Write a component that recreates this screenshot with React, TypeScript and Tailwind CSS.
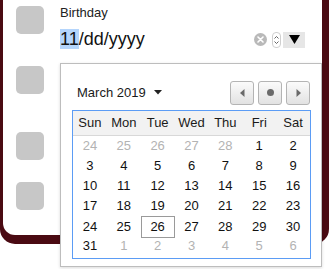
import React from "react";

const WEEKDAYS = ["Sun", "Mon", "Tue", "Wed", "Thu", "Fri", "Sat"];

type Day = { n: number; muted: boolean; today?: boolean };

const WEEKS: Day[][] = [
  [24, 25, 26, 27, 28].map((n) => ({ n, muted: true })).concat([1, 2].map((n) => ({ n, muted: false }))),
  [3, 4, 5, 6, 7, 8, 9].map((n) => ({ n, muted: false })),
  [10, 11, 12, 13, 14, 15, 16].map((n) => ({ n, muted: false })),
  [17, 18, 19, 20, 21, 22, 23].map((n) => ({ n, muted: false })),
  [24, 25, 26, 27, 28, 29, 30].map((n) => ({ n, muted: false, today: n === 26 })),
  [{ n: 31, muted: false }].concat([1, 2, 3, 4, 5, 6].map((n) => ({ n, muted: true }))),
];

function NavButton({ children }: { children: React.ReactNode }) {
  return (
    <div className="w-[24px] h-[24px] rounded-[3px] border border-[#b4b4b4] bg-gradient-to-b from-[#fbfbfb] to-[#e2e2e2] flex items-center justify-center">
      {children}
    </div>
  );
}

function Picker() {
  return (
    <div className="absolute left-[60px] top-[63px] w-[262px] h-[204px] bg-white border border-[#bdbdbd] shadow-[0_1px_3px_rgba(0,0,0,0.15)]">
      <div className="flex items-center justify-between pl-[16px] pr-[11px] pt-[11px] h-[46px]">
        <div className="flex items-center gap-[8px] text-[13px] text-[#1a1a1a]">
          <span>March 2019</span>
          <svg width="8" height="5" viewBox="0 0 8 5">
            <path d="M0 0 L8 0 L4 4.5 Z" fill="#222" />
          </svg>
        </div>
        <div className="flex gap-[4px]">
          <NavButton>
            <svg width="5" height="8" viewBox="0 0 5 8">
              <path d="M4.5 0 L4.5 8 L0 4 Z" fill="#6a6a6a" />
            </svg>
          </NavButton>
          <NavButton>
            <div className="w-[7px] h-[7px] rounded-full bg-[#6a6a6a]" />
          </NavButton>
          <NavButton>
            <svg width="5" height="8" viewBox="0 0 5 8">
              <path d="M0.5 0 L0.5 8 L5 4 Z" fill="#6a6a6a" />
            </svg>
          </NavButton>
        </div>
      </div>
      <div className="ml-[11px] w-[239px] border border-[#5b9cf5]">
        <div className="grid grid-cols-7 h-[25px] bg-[#f2f2f2] border-b border-[#d8d8d8] text-[13px] text-[#1a1a1a]">
          {WEEKDAYS.map((d) => (
            <div key={d} className="flex items-center justify-center">
              {d}
            </div>
          ))}
        </div>
        <div className="pb-[2px]">
          {WEEKS.map((week, i) => (
            <div key={i} className="grid grid-cols-7 h-[20px] text-[13px]">
              {week.map((day, j) => (
                <div
                  key={j}
                  className={
                    "flex items-center justify-center " +
                    (day.muted ? "text-[#b3b3b3] " : "text-[#111] ") +
                    (day.today ? "border border-[#9a9a9a]" : "")
                  }
                >
                  {day.n}
                </div>
              ))}
            </div>
          ))}
        </div>
      </div>
    </div>
  );
}

export default function App() {
  return (
    <div
      className="relative w-[329px] h-[269px] bg-white overflow-hidden"
      style={{ fontFamily: '"Liberation Sans", Arial, sans-serif' }}
    >
      <div className="bg-[#4a0a12] pl-[3px] pr-[7px] pb-[9px] rounded-b-[15px]">
        <div className="h-[235px] bg-white rounded-b-[12px] pl-[13px]">
          <div className="flex h-[66px] pt-[6px] gap-[16px]">
            <div className="w-[28px] h-[28px] rounded-[5px] bg-[#c7c7c7] shrink-0" />
            <div className="flex-1 -mt-[1px]">
              <div className="text-[13px] text-[#222] leading-[16px]">Birthday</div>
              <div className="flex items-center justify-between mt-[8px] pr-[17px]">
                <div className="text-[18px] leading-[21px] text-[#111]">
                  <span className="bg-[#b4d5fc]">11</span>/dd/yyyy
                </div>
                <div className="flex items-center">
                  <div className="w-[13px] h-[13px] rounded-full bg-[#b9b9b9] flex items-center justify-center">
                    <svg width="7" height="7" viewBox="0 0 7 7">
                      <path d="M1 1 L6 6 M6 1 L1 6" stroke="white" strokeWidth="1.6" strokeLinecap="round" />
                    </svg>
                  </div>
                  <div className="ml-[5px] w-[9px] h-[16px] rounded-[4px] border border-[#cfcfcf] flex flex-col items-center justify-center gap-[2px]">
                    <svg width="5" height="3" viewBox="0 0 5 3">
                      <path d="M0.5 2.5 L2.5 0.5 L4.5 2.5" stroke="#555" strokeWidth="0.9" fill="none" />
                    </svg>
                    <svg width="5" height="3" viewBox="0 0 5 3">
                      <path d="M0.5 0.5 L2.5 2.5 L4.5 0.5" stroke="#555" strokeWidth="0.9" fill="none" />
                    </svg>
                  </div>
                  <div className="ml-[2px] w-[22px] h-[16px] bg-[#e6e6e6] flex items-center justify-center">
                    <svg width="11" height="9" viewBox="0 0 11 9">
                      <path d="M0 0 L11 0 L5.5 9 Z" fill="#000" />
                    </svg>
                  </div>
                </div>
              </div>
            </div>
          </div>
          <div className="flex h-[66px]">
            <div className="w-[28px] h-[28px] rounded-[5px] bg-[#c7c7c7]" />
          </div>
          <div className="flex h-[50px]">
            <div className="w-[28px] h-[28px] rounded-[5px] bg-[#c7c7c7]" />
          </div>
          <div className="flex">
            <div className="w-[28px] h-[28px] rounded-[5px] bg-[#c7c7c7]" />
          </div>
        </div>
      </div>
      <Picker />
    </div>
  );
}
